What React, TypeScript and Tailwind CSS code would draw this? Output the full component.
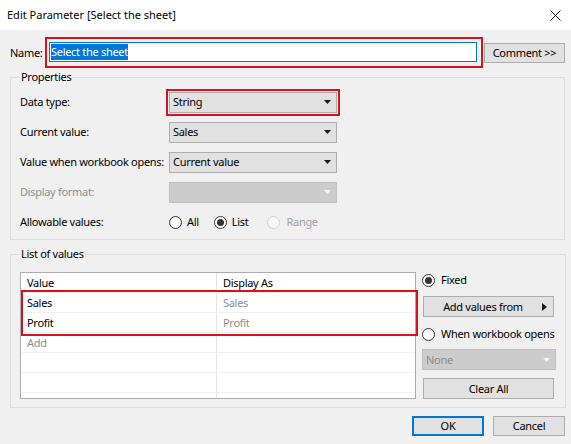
import React from 'react'
import clsx from 'clsx'

const font = { fontFamily: '"Noto Sans", "Segoe UI", sans-serif' }

function Caret({ light }: { light?: boolean }) {
  return (
    <svg width="7" height="4" viewBox="0 0 7 4" className="shrink-0">
      <polygon points="0,0 7,0 3.5,4" fill={light ? '#f4f4f4' : '#1a1a1a'} />
    </svg>
  )
}

function Dropdown({
  value,
  disabled,
  className,
}: {
  value?: string
  disabled?: boolean
  className?: string
}) {
  return (
    <div
      className={clsx(
        'flex h-[21px] items-center justify-between border pl-[3px] pr-[5px]',
        disabled
          ? 'border-[#bfbfbf] bg-[#cccccc] text-[#8d8d8d]'
          : 'border-[#adadad] bg-[#e1e1e1] text-black',
        className
      )}
    >
      <span>{value}</span>
      <Caret light={disabled} />
    </div>
  )
}

function Radio({ checked, disabled }: { checked?: boolean; disabled?: boolean }) {
  return (
    <span
      className={clsx(
        'flex h-[13px] w-[13px] shrink-0 items-center justify-center rounded-full border',
        disabled ? 'border-[#cfcfcf] bg-[#f7f7f7]' : 'border-[#333333] bg-white'
      )}
    >
      {checked && <span className="h-[7px] w-[7px] rounded-full bg-[#333333]" />}
    </span>
  )
}

function Button({
  children,
  className,
}: {
  children: React.ReactNode
  className?: string
}) {
  return (
    <div
      className={clsx(
        'flex items-center justify-center border border-[#adadad] bg-[#e1e1e1]',
        className
      )}
    >
      {children}
    </div>
  )
}

function PropRow({
  label,
  muted,
  children,
}: {
  label: string
  muted?: boolean
  children: React.ReactNode
}) {
  return (
    <div className="flex h-[30px] items-center">
      <div className={clsx('w-[149px] shrink-0 whitespace-nowrap', muted && 'text-[#8d8d8d]')}>
        {label}
      </div>
      {children}
    </div>
  )
}

const rows = [
  { value: 'Value', display: 'Display As', header: true },
  { value: 'Sales', display: 'Sales' },
  { value: 'Profit', display: 'Profit' },
  { value: 'Add', display: '', add: true },
  { value: '', display: '' },
  { value: '', display: '' },
  { value: '', display: '' },
]

export default function App() {
  return (
    <div
      style={font}
      className="flex h-[444px] w-[571px] flex-col whitespace-nowrap bg-[#f0f0f0] text-[11px] leading-[16px] text-black"
    >
      {/* window title bar */}
      <div className="flex h-[30px] items-center justify-between bg-white pl-[7px] pr-[10px]">
        <span>Edit Parameter [Select the sheet]</span>
        <svg width="11" height="11" viewBox="0 0 11 11">
          <path d="M0.5 0.5 L10.5 10.5 M10.5 0.5 L0.5 10.5" stroke="#111" strokeWidth="1" />
        </svg>
      </div>

      <div className="flex flex-col pl-[10px] pr-[6px] pt-[7px] tracking-[-0.3px]">
        {/* name */}
        <div className="flex items-center">
          <span className="w-[35px] shrink-0">Name:</span>
          <div className="border-2 border-[#d8111b] pb-[4px] pl-[2px] pr-[4px] pt-[3px]">
            <div className="flex h-[20px] w-[428px] items-center border border-[#0078d7] bg-white pl-[1px]">
              <span className="bg-[#0078d7] text-white">Select the sheet</span>
            </div>
          </div>
          <Button className="ml-[1px] h-[20px] w-[81px]">Comment &gt;&gt;</Button>
        </div>

        {/* properties */}
        <fieldset className="mt-[1px] border border-[#dcdcdc] pb-[2px] pl-[9px] pr-[9px]">
          <legend className="px-[1px]">Properties</legend>
          <div className="flex flex-col pt-[2px]">
            <PropRow label="Data type:">
              <Dropdown
                value="String"
                className="w-[168px] outline-2 outline-offset-1 outline-[#d8111b] outline-solid"
              />
            </PropRow>
            <PropRow label="Current value:">
              <Dropdown value="Sales" className="w-[168px]" />
            </PropRow>
            <PropRow label="Value when workbook opens:">
              <Dropdown value="Current value" className="w-[168px]" />
            </PropRow>
            <PropRow label="Display format:" muted>
              <Dropdown disabled className="w-[168px]" />
            </PropRow>
            <PropRow label="Allowable values:">
              <div className="flex items-center">
                <Radio />
                <span className="ml-[5px]">All</span>
                <span className="ml-[15px]" />
                <Radio checked />
                <span className="ml-[5px]">List</span>
                <span className="ml-[19px]" />
                <Radio disabled />
                <span className="ml-[6px] text-[#a0a0a0]">Range</span>
              </div>
            </PropRow>
          </div>
        </fieldset>

        {/* list of values */}
        <fieldset className="mt-[6px] border border-[#dcdcdc] pb-[8px] pl-[9px] pr-[9px]">
          <legend className="px-[1px]">List of values</legend>
          <div className="flex pt-[10px]">
            <div className="relative">
              <div className="h-[127px] w-[396px] overflow-hidden border border-[#adadad] bg-white">
                {rows.map((r, i) => (
                  <div key={i} className="flex h-[20px] border-b border-[#f0f0f0]">
                    <div
                      className={clsx(
                        'w-[196px] border-r border-[#e5e5e5] pl-[6px] pt-[2px]',
                        r.add && 'text-[#8d8d8d]'
                      )}
                    >
                      {r.value}
                    </div>
                    <div
                      className={clsx(
                        'flex-1 pl-[6px] pt-[2px]',
                        !r.header && 'text-[#8d8d8d]'
                      )}
                    >
                      {r.display}
                    </div>
                  </div>
                ))}
              </div>
              {/* highlight around the value rows */}
              <div className="pointer-events-none absolute left-[1px] top-[18px] h-[46px] w-[397px] border-2 border-[#d8111b]" />
            </div>

            <div className="ml-[6px] flex w-[134px] flex-col">
              <div className="flex h-[16px] items-center">
                <Radio checked />
                <span className="ml-[6px]">Fixed</span>
              </div>
              <div className="ml-[1px] mt-[8px] flex h-[21px] w-[131px] items-center border border-[#adadad] bg-[#e1e1e1] pr-[6px]">
                <span className="flex-1 text-center">Add values from</span>
                <svg width="5" height="8" viewBox="0 0 5 8">
                  <polygon points="0,0 5,4 0,8" fill="#1a1a1a" />
                </svg>
              </div>
              <div className="mt-[9px] flex h-[16px] items-center">
                <Radio />
                <span className="ml-[6px]">When workbook opens</span>
              </div>
              <Dropdown value="None" disabled className="mt-[7px] w-[134px]" />
              <Button className="ml-[1px] mt-[8px] h-[21px] w-[131px]">Clear All</Button>
            </div>
          </div>
        </fieldset>

        {/* dialog buttons */}
        <div className="mt-[8px] flex justify-end gap-[9px]">
          <div className="flex h-[20px] w-[72px] items-center justify-center border-2 border-[#0078d7] bg-[#e1e1e1]">
            OK
          </div>
          <Button className="h-[20px] w-[72px]">Cancel</Button>
        </div>
      </div>
    </div>
  )
}
